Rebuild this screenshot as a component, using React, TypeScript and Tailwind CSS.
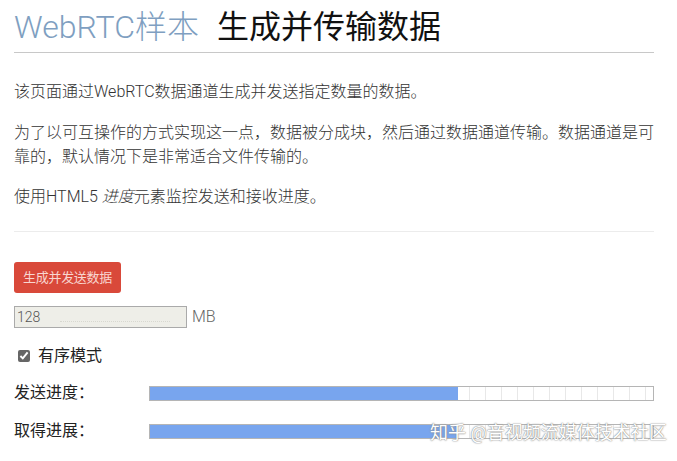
const font = "font-['Roboto','Noto_Sans_CJK_SC',sans-serif]";

function ProgressRow({ label, value }: { label: string; value: number }) {
  return (
    <div className="flex items-center h-6">
      <span className="w-[135px] text-[16px] text-[#222]">{label}</span>
      <div className="relative h-[15px] w-[505px] border border-[#b5b5b5] bg-white bg-[repeating-linear-gradient(90deg,transparent_0,transparent_15px,#e8e8e8_15px,#e8e8e8_16px)]">
        <div className="h-full bg-[#78a5ee]" style={{ width: `${value}%` }} />
      </div>
    </div>
  );
}

export default function App() {
  return (
    <div className={`relative min-h-[461px] bg-white ${font} text-[#333]`}>
      <div className="w-[640px] ml-[14px] pt-[9px]">
        {/* header */}
        <h1 className="text-[32px] leading-[36px] pb-[7px] border-b border-[#c8c8c8] whitespace-nowrap">
          <span className="font-light text-[#7f9fc1]">WebRTC样本</span>
          <span className="ml-[18px] text-[#111]">生成并传输数据</span>
        </h1>

        {/* description */}
        <div className="text-[16px] leading-6 font-light">
          <p className="mt-[27px]">该页面通过WebRTC数据通道生成并发送指定数量的数据。</p>
          <p className="mt-[17px]">
            为了以可互操作的方式实现这一点，数据被分成块，然后通过数据通道传输。数据通道是可靠的，默认情况下是非常适合文件传输的。
          </p>
          <p className="mt-[16px]">
            使用HTML5 <em>进度</em>元素监控发送和接收进度。
          </p>
        </div>

        <div className="mt-[22px] border-t border-[#ececec]" />

        {/* controls */}
        <button className="mt-[30px] h-[31px] w-[107px] rounded-[3px] bg-[#d9493a] text-[13px] text-[#f8d6d0] tracking-[-0.3px]">
          生成并发送数据
        </button>

        <div className="mt-[12px] flex items-center">
          <div className="relative flex items-center h-[22px] w-[173px] border border-[#aaa] bg-[#eeeee8] px-[2px] text-[14px] text-[#555] font-light">
            128
            <span className="ml-[20px] mt-[8px] w-[110px] border-b border-dotted border-[#d8d8d0]" />
          </div>
          <span className="ml-[5px] text-[16px] text-[#666] font-light">MB</span>
        </div>

        <label className="mt-[15px] flex items-center h-6 pl-[4px] text-[16px] text-[#222]">
          <input type="checkbox" defaultChecked className="w-[12px] h-[12px] accent-[#666]" />
          <span className="ml-[8px]">有序模式</span>
        </label>

        <div className="mt-[13px] flex flex-col gap-[14px]">
          <ProgressRow label="发送进度：" value={61.3} />
          <ProgressRow label="取得进展：" value={61.3} />
        </div>
      </div>

      {/* watermark */}
      <div className="absolute left-[430px] top-[421px] text-[18px] leading-6 text-white whitespace-nowrap [text-shadow:0_0_1px_#777,0_0_2px_#999]">
        知乎 @音视频流媒体技术社区
      </div>
    </div>
  );
}
